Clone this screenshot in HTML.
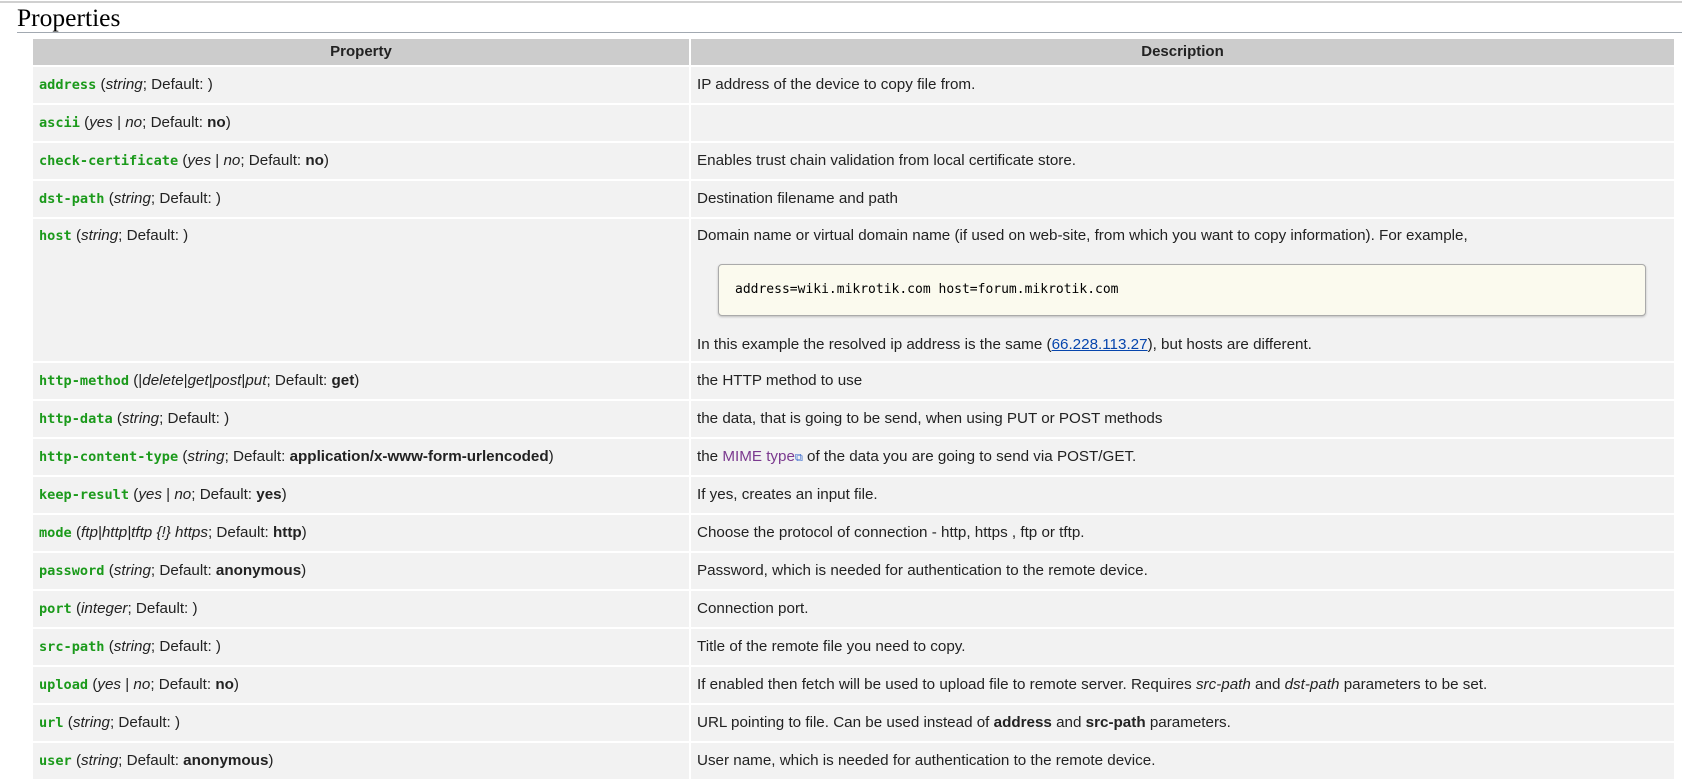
<!DOCTYPE html>
<html><head><meta charset="utf-8"><style>
html,body{margin:0;padding:0;background:#fff;width:1682px;height:780px;overflow:hidden}
body{font-family:"Liberation Sans",Arial,sans-serif;font-size:15.2px;color:#222}
.top{position:absolute;left:0;top:1px;width:1682px;height:2px;background:#d0d0d0}
h2{position:absolute;left:17px;top:3px;margin:0;font-family:"Liberation Serif",serif;font-weight:normal;font-size:25.5px;color:#000;width:1665px;border-bottom:1px solid #a2a9b1;height:29px;line-height:29px}
table{position:absolute;left:31px;top:36.6px;border-collapse:separate;border-spacing:2px;table-layout:fixed;width:1645px}
th{background:#ccc;height:26px;padding:0;font-weight:bold;font-size:15px}
td{background:#f2f2f2;height:36px;padding:0 0 0 6px;vertical-align:middle}
code{font-family:"DejaVu Sans Mono","Liberation Mono",monospace;font-weight:bold;color:#1b9a1b;font-size:13.6px}
.pre{margin:20px 28px 20px 21px;background:#fbfaee;border:1px solid #aaa;border-radius:4px;box-shadow:0 1px 2px #bbb;height:50px;line-height:50px;padding-left:16px;font-family:"DejaVu Sans Mono","Liberation Mono",monospace;font-size:13px;color:#000}
a{color:#0645ad}
.ext{color:#7b3a8f;text-decoration:none}
</style></head><body>
<div class="top"></div>
<h2>Properties</h2>
<table>
<colgroup><col style="width:656px"><col></colgroup>
<tr><th>Property</th><th>Description</th></tr>
<tr><td><code>address</code> (<i>string</i>; Default: )</td><td>IP address of the device to copy file from.</td></tr>
<tr><td><code>ascii</code> (<i>yes</i> | <i>no</i>; Default: <b>no</b>)</td><td></td></tr>
<tr><td><code>check-certificate</code> (<i>yes</i> | <i>no</i>; Default: <b>no</b>)</td><td>Enables trust chain validation from local certificate store.</td></tr>
<tr><td><code>dst-path</code> (<i>string</i>; Default: )</td><td>Destination filename and path</td></tr>
<tr><td style="height:134px;vertical-align:top;padding-top:8px"><code>host</code> (<i>string</i>; Default: )</td><td style="height:134px;vertical-align:top;padding-top:8px">Domain name or virtual domain name (if used on web-site, from which you want to copy information). For example,<div class="pre">address=wiki.mikrotik.com host=forum.mikrotik.com</div><div>In this example the resolved ip address is the same (<a href="#">66.228.113.27</a>), but hosts are different.</div></td></tr>
<tr><td><code>http-method</code> (|<i>delete</i>|<i>get</i>|<i>post</i>|<i>put</i>; Default: <b>get</b>)</td><td>the HTTP method to use</td></tr>
<tr><td><code>http-data</code> (<i>string</i>; Default: )</td><td>the data, that is going to be send, when using PUT or POST methods</td></tr>
<tr><td><code>http-content-type</code> (<i>string</i>; Default: <b>application/x-www-form-urlencoded</b>)</td><td>the <a class="ext" href="#">MIME type</a><span style="color:#36c;font-size:11px">⧉</span> of the data you are going to send via POST/GET.</td></tr>
<tr><td><code>keep-result</code> (<i>yes</i> | <i>no</i>; Default: <b>yes</b>)</td><td>If yes, creates an input file.</td></tr>
<tr><td><code>mode</code> (<i>ftp|http|tftp {!} https</i>; Default: <b>http</b>)</td><td>Choose the protocol of connection - http, https , ftp or tftp.</td></tr>
<tr><td><code>password</code> (<i>string</i>; Default: <b>anonymous</b>)</td><td>Password, which is needed for authentication to the remote device.</td></tr>
<tr><td><code>port</code> (<i>integer</i>; Default: )</td><td>Connection port.</td></tr>
<tr><td><code>src-path</code> (<i>string</i>; Default: )</td><td>Title of the remote file you need to copy.</td></tr>
<tr><td><code>upload</code> (<i>yes</i> | <i>no</i>; Default: <b>no</b>)</td><td>If enabled then fetch will be used to upload file to remote server. Requires <i>src-path</i> and <i>dst-path</i> parameters to be set.</td></tr>
<tr><td><code>url</code> (<i>string</i>; Default: )</td><td>URL pointing to file. Can be used instead of <b>address</b> and <b>src-path</b> parameters.</td></tr>
<tr><td><code>user</code> (<i>string</i>; Default: <b>anonymous</b>)</td><td>User name, which is needed for authentication to the remote device.</td></tr>
</table>
</body></html>
